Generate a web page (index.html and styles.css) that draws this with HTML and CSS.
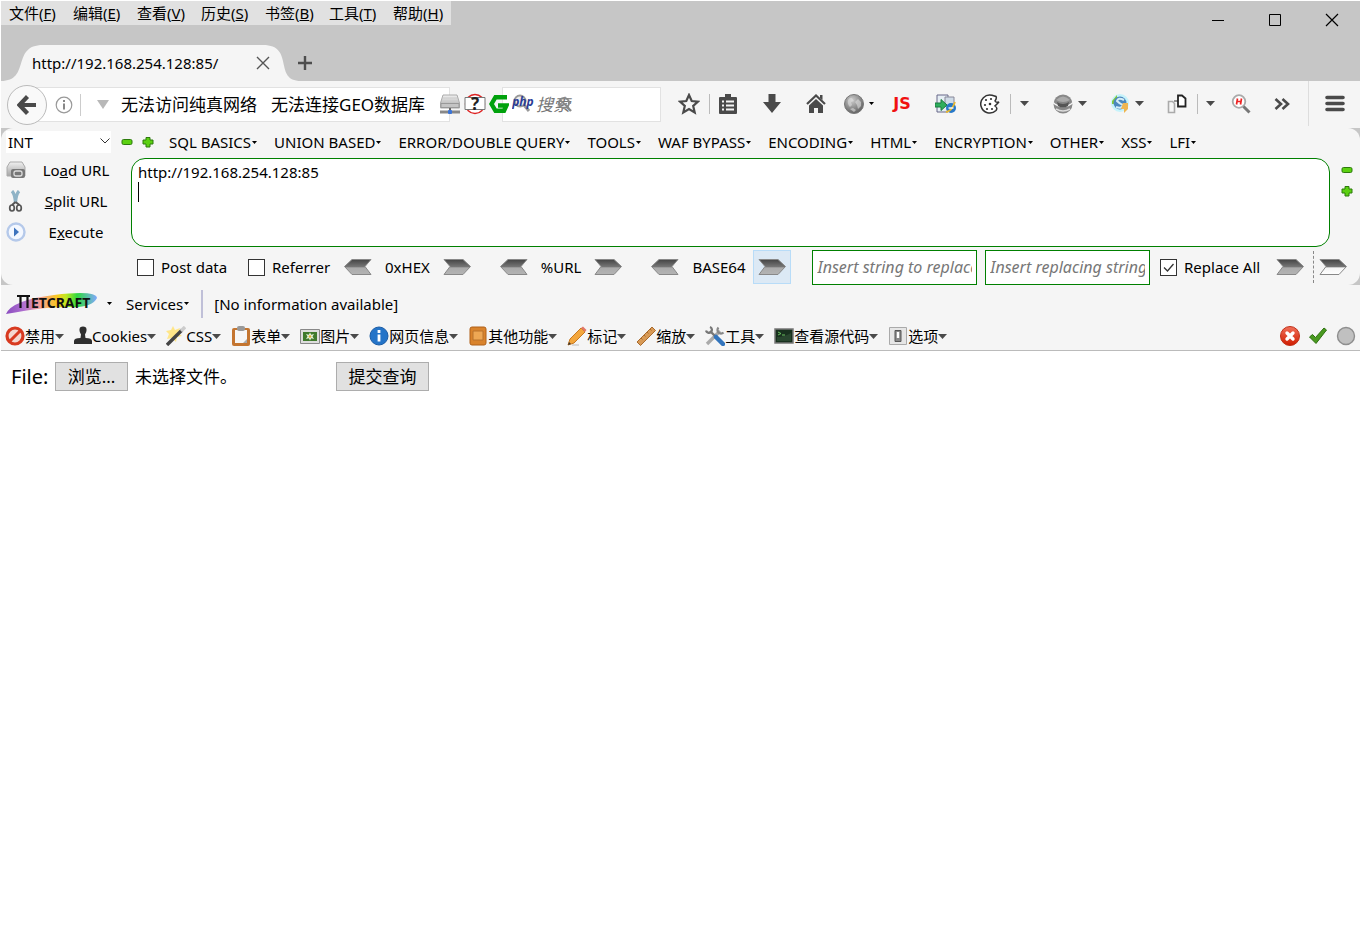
FILE: index.html
```html
<!DOCTYPE html>
<html lang="zh-CN">
<head>
<meta charset="utf-8">
<title>http://192.168.254.128:85/</title>
<link rel="stylesheet" href="styles.css">
</head>
<body>
<svg class="defs" aria-hidden="true">
  <defs>
    <linearGradient id="steel" x1="0" y1="0" x2="0" y2="1"><stop offset="0" stop-color="#444"/><stop offset=".5" stop-color="#777"/><stop offset=".55" stop-color="#aaa"/><stop offset="1" stop-color="#b4b4b4"/></linearGradient>
    <linearGradient id="steelopen" x1="0" y1="0" x2="0" y2="1"><stop offset="0" stop-color="#444"/><stop offset=".5" stop-color="#777"/><stop offset=".55" stop-color="#f4f4f4"/><stop offset="1" stop-color="#fff"/></linearGradient>
    <linearGradient id="metal" x1="0" y1="0" x2="0" y2="1"><stop offset="0" stop-color="#f0f0f0"/><stop offset="1" stop-color="#a4a4a4"/></linearGradient>
    <radialGradient id="ball" cx=".4" cy=".3" r=".8"><stop offset="0" stop-color="#ccc"/><stop offset="1" stop-color="#555"/></radialGradient>
    <linearGradient id="red" x1="0" y1="0" x2="0" y2="1"><stop offset="0" stop-color="#f0705a"/><stop offset="1" stop-color="#d01c00"/></linearGradient>
    <linearGradient id="rainbow"><stop offset="0" stop-color="#8a4cc0"/><stop offset=".2" stop-color="#b070d0"/><stop offset=".38" stop-color="#f8a090"/><stop offset=".56" stop-color="#f8c820"/><stop offset=".66" stop-color="#c0e820"/><stop offset=".78" stop-color="#30d840"/><stop offset="1" stop-color="#80a8ff"/></linearGradient>
    <symbol id="caret" viewBox="0 0 5 3"><path d="M0 0h5L2.500 3z"/></symbol>
    <symbol id="tri" viewBox="0 0 9 5"><path d="M0 0h9L4.500 5z"/></symbol>
    <symbol id="right" viewBox="0 0 28 16"><path d="M1 .5h19l7.500 7-7.500 8H1l6-8z" fill="url(#steel)" stroke="#888"/></symbol>
    <symbol id="left" viewBox="0 0 28 16"><path d="M27 .5H8L.5 7.500l7.500 8h19l-6-8z" fill="url(#steel)" stroke="#888"/></symbol>
    <symbol id="minus" viewBox="0 0 12 12"><rect x="1" y="3.500" width="10" height="5" rx="1.500" fill="#5bd010" stroke="#2c7a0c"/></symbol>
    <symbol id="plus" viewBox="0 0 12 12"><path d="M4 1.500h4V4h3v4H8v3H4V8H1V4h3z" fill="#5bd010" stroke="#2c7a0c" stroke-linejoin="round"/></symbol>
  </defs>
</svg>

<div class="window">
  <header class="titlebar">
    <nav class="menubar">
      <button>文件(<u>F</u>)</button><button>编辑(<u>E</u>)</button><button>查看(<u>V</u>)</button><button>历史(<u>S</u>)</button><button>书签(<u>B</u>)</button><button>工具(<u>T</u>)</button><button>帮助(<u>H</u>)</button>
    </nav>
    <div class="winctl">
      <button aria-label="最小化"><svg width="14" height="14"><path d="M1 7.500h12" stroke="#000"/></svg></button>
      <button aria-label="最大化"><svg width="14" height="14"><path d="M1.500 1.500h11v11h-11z" fill="none" stroke="#000"/></svg></button>
      <button aria-label="关闭"><svg width="14" height="14"><path d="M1 1l12 12M13 1L1 13" stroke="#000" stroke-width="1.200"/></svg></button>
    </div>
  </header>
  <div class="tabs">
    <div class="tab">
      <svg class="tabshape" viewBox="0 0 300 36" width="300" height="36"><path d="M0 36C30 36 10 0 42 0H262C294 0 272 36 300 36z" fill="#f5f5f5"/></svg>
      <span class="tabtitle">http://192.168.254.128:85/</span>
      <button aria-label="关闭标签页"><svg width="14" height="14"><path d="M1 1l12 12M13 1L1 13" stroke="#555" stroke-width="1.400"/></svg></button>
    </div>
    <button class="newtab" aria-label="新标签页"><svg width="16" height="16"><path d="M8 1v14M1 8h14" stroke="#4d4d4d" stroke-width="2.400"/></svg></button>
  </div>

  <div class="navbar">
    <button class="back" aria-label="后退"><svg width="20" height="20" viewBox="0 0 20 20"><path d="M10.500 1.500L2.500 10l8 8.500M3.500 10H19" fill="none" stroke="#4a4a4a" stroke-width="4.200"/></svg></button>
    <div class="urlbar">
      <svg width="18" height="18" viewBox="0 0 18 18"><circle cx="9" cy="9" r="7.800" fill="none" stroke="#999" stroke-width="1.200"/><path d="M9 7.500v6M9 4v2" stroke="#888" stroke-width="2"/></svg>
      <span class="vline"></span>
      <svg class="drop" width="12" height="9"><path d="M0 0h12L6 9z" fill="#b8b8b8"/></svg>
      <span class="geo">无法访问纯真网络</span><span class="geo">无法连接GEO数据库</span>
    </div>
    <div class="search">
      <input type="text" placeholder="搜索" aria-label="搜索">
      <div class="addons">
        <svg width="22" height="22" viewBox="0 0 22 22"><path d="M4 2h14l2.500 8v5h-19v-5z" fill="url(#metal)" stroke="#aaa"/><path d="M4 5h14M3 8h16" stroke="#ccc"/><path d="M2 10.500h18v4H2z" fill="#c4c4c4" stroke="#999"/><path d="M11 15v3" stroke="#666" stroke-width="2"/><path d="M1 19h20" stroke="#888" stroke-width="3"/><rect x="9" y="17" width="4" height="4" rx="1" fill="#3a74d8"/></svg>
        <svg width="22" height="22" viewBox="0 0 22 22"><circle cx="11" cy="11" r="9.500" fill="#fff" stroke="#d22" stroke-width="1.400"/><path d="M1 4.500h20v12H1z" fill="#fff" stroke="#777"/><text x="11" y="17" text-anchor="middle" font-size="17" font-weight="bold" fill="#222">?</text></svg>
        <svg width="20" height="20" viewBox="0 0 20 20"><path d="M18 3.200H6.500L2.500 10l4 6.800h8.500L17.500 11.500H9" fill="none" stroke="#00a10c" stroke-width="4.400"/></svg>
        <svg width="24" height="20" viewBox="0 0 24 20"><circle cx="8" cy="7" r="5.500" fill="#eee" stroke="#999" stroke-width="2"/><path d="M12 11l5 6" stroke="#999" stroke-width="3"/><text x="11" y="12" text-anchor="middle" font-size="12" font-weight="bold" font-style="italic" fill="#2a3c95">php</text></svg>
      </div>
      <svg class="lens" width="16" height="16" viewBox="0 0 16 16"><circle cx="8" cy="7" r="5" fill="none" stroke="#888" stroke-width="2"/><path d="M4 4l8 7" stroke="#888" stroke-width="2"/><path d="M11 11l4 4" stroke="#888" stroke-width="2.400"/></svg>
    </div>
    <div class="tools">
      <button class="w44" aria-label="收藏"><svg width="22" height="22" viewBox="0 0 22 22"><path d="M11 2l2.700 6 6.300.6-4.800 4.300 1.500 6.600L11 16l-5.700 3.500 1.500-6.600L2 8.600 8.300 8z" fill="none" stroke="#4a4a4a" stroke-width="2.200"/></svg></button>
      <span class="sep"></span>
      <button class="w44" aria-label="书签列表"><svg width="20" height="20" viewBox="0 0 20 20"><path d="M2 3h5V0h6v3h5q1 0 1 1v15q0 1-1 1H2q-1 0-1-1V4q0-1 1-1z" fill="#4a4a4a"/><path d="M4 7.500h2M8 7.500h8M4 11.500h2M8 11.500h8M4 15.500h2M8 15.500h8" stroke="#f5f5f5" stroke-width="2"/></svg></button>
      <button class="w44" aria-label="下载"><svg width="18" height="19" viewBox="0 0 18 19"><path d="M5.500 0h7v8H18l-9 11L0 8h5.500z" fill="#4a4a4a"/></svg></button>
      <button class="w44" aria-label="主页"><svg width="20" height="19" viewBox="0 0 20 19"><path d="M1 10L10 1.500 19 10" fill="none" stroke="#4a4a4a" stroke-width="2.200"/><path d="M3 11.500L10 5l7 6.500V19h-5v-5H8v5H3zM14 1h2.500v5L14 4z" fill="#4a4a4a"/></svg></button>
      <button class="w42" aria-label="代理"><svg width="20" height="20" viewBox="0 0 20 20"><circle cx="10" cy="10" r="9.500" fill="url(#ball)" stroke="#777"/><path d="M4 6q2-3 4-2l2 3-3 1 1 3-2 2q-3-3-2-7M11 8l3-3 3 3v4l-3 3-1-4zM6 15l3-1 3 2-2 2z" fill="#ddd" opacity=".6"/></svg><svg class="c5"><use href="#caret"/></svg></button>
      <button class="w44 js">JS</button>
      <button class="w44" aria-label="在 IE 中打开"><svg width="22" height="20" viewBox="0 0 22 20"><path d="M2 1h11v17H2z" fill="#e6eef4" stroke="#668"/><path d="M10 3h9v9h-9z" fill="#cfdbe6" stroke="#889"/><path d="M0 9h6V5.500l6 5.500-6 5.500V13H0z" fill="#2fae5c" stroke="#1b7a3e"/><circle cx="16" cy="14" r="5" fill="#2778c8"/><path d="M11 18Q17 17 20 8" stroke="#e8b830" stroke-width="1.800" fill="none"/><path d="M13.500 14h5" stroke="#fff" stroke-width="1.400"/></svg></button>
      <button class="w44" aria-label="Cookie"><svg width="20" height="20" viewBox="0 0 20 20"><path d="M12 1.300A9 9 0 1 0 16 16.500Q18 14 15 12q1-1 4-4-3 1-4-1 2-3 1-4.500z" fill="#fff" stroke="#333" stroke-width="1.500"/><g fill="#333"><circle cx="6" cy="6" r="1.100"/><circle cx="11" cy="5" r="1.100"/><circle cx="5" cy="11" r="1.100"/><circle cx="10" cy="10" r="1.300"/><circle cx="7" cy="15" r="1.100"/><circle cx="12" cy="15" r="1.100"/></g></svg></button>
      <span class="sep"></span>
      <button class="w34" aria-label="Cookie 菜单"><svg class="c9"><use href="#tri"/></svg></button>
      <button class="w57" aria-label="伪装"><svg width="20" height="20" viewBox="0 0 20 20"><circle cx="10" cy="10" r="9.500" fill="#888"/><path d="M3 6q7-7 14 0-7 4-14 0" fill="#aaa"/><path d="M0 8.500q4 4 10 4t10-4" fill="none" stroke="#f5f5f5" stroke-width="1.600"/><path d="M4 8q6 4 12 0l-1 4q-5 3-10 0z" fill="#555"/><path d="M3 15q7 4 14 0" fill="none" stroke="#ddd" stroke-width="1.500"/></svg><svg class="c9"><use href="#tri"/></svg></button>
      <button class="w57" aria-label="切换"><svg width="20" height="20" viewBox="0 0 20 20"><circle cx="10" cy="9" r="9" fill="#c6f3fb"/><path d="M2 7L7 1v3h6v6H2z" fill="#86cc36"/><circle cx="10" cy="9" r="6.500" fill="#4b87bd"/><path d="M14 6Q8 3 7 7q3 3 6 4-1 4-7 2" fill="none" stroke="#d4edf5" stroke-width="2"/><path d="M13 9h5v6l-4 4v-4h-3z" fill="#efb550"/></svg><svg class="c9"><use href="#tri"/></svg></button>
      <button class="w44" aria-label="移动页面"><svg width="20" height="20" viewBox="0 0 20 20"><path d="M1.500 7.500h4l2 2v9h-6z" fill="none" stroke="#aaa" stroke-width="1.600"/><path d="M7 7h4" stroke="#333"/><path d="M11 1.500h4l3.500 3v8H11z" fill="#fff" stroke="#222" stroke-width="1.800"/></svg></button>
      <span class="sep"></span>
      <button class="w32" aria-label="页面菜单"><svg class="c9"><use href="#tri"/></svg></button>
      <button class="w30" aria-label="HackBar 搜索"><svg width="20" height="20" viewBox="0 0 20 20"><circle cx="8" cy="7.500" r="6.300" fill="#fff" stroke="#aaa" stroke-width="1.800"/><path d="M12.500 12.500l6 6" stroke="#777" stroke-width="3"/><path d="M6.500 4.500l-1 6M10.500 4.500l-1 6M6 7.500h4" stroke="#e22" stroke-width="1.700"/></svg></button>
      <button class="w52" aria-label="更多工具"><svg width="16" height="12" viewBox="0 0 16 12"><path d="M1.500 1L7 6l-5.500 5M8.500 1L14 6l-5.500 5" fill="none" stroke="#4a4a4a" stroke-width="2.600"/></svg></button>
      <button class="w52 burger" aria-label="打开菜单"><svg width="20" height="17" viewBox="0 0 20 17"><path d="M2 2.500h16M2 8.500h16M2 14.500h16" stroke="#4a4a4a" stroke-width="3.600" stroke-linecap="round"/></svg></button>
    </div>
  </div>

  <div class="hackwrap">
  <section class="hackbar">
    <div class="hacktop">
      <select aria-label="类型"><option>INT</option></select>
      <div class="pm"><button aria-label="减"><svg width="12" height="12"><use href="#minus"/></svg></button><button aria-label="加"><svg width="12" height="12"><use href="#plus"/></svg></button></div>
      <nav class="hackmenu">
        <button>SQL BASICS<svg class="c5"><use href="#caret"/></svg></button>
        <button>UNION BASED<svg class="c5"><use href="#caret"/></svg></button>
        <button>ERROR/DOUBLE QUERY<svg class="c5"><use href="#caret"/></svg></button>
        <button>TOOLS<svg class="c5"><use href="#caret"/></svg></button>
        <button>WAF BYPASS<svg class="c5"><use href="#caret"/></svg></button>
        <button>ENCODING<svg class="c5"><use href="#caret"/></svg></button>
        <button>HTML<svg class="c5"><use href="#caret"/></svg></button>
        <button>ENCRYPTION<svg class="c5"><use href="#caret"/></svg></button>
        <button>OTHER<svg class="c5"><use href="#caret"/></svg></button>
        <button>XSS<svg class="c5"><use href="#caret"/></svg></button>
        <button>LFI<svg class="c5"><use href="#caret"/></svg></button>
      </nav>
    </div>
    <div class="hackmid">
      <div class="actions">
        <button><svg width="20" height="20" viewBox="0 0 20 20"><path d="M4 2h12l3 5v9H1V7z" fill="url(#metal)" stroke="#aaa"/><rect x="5" y="9" width="14" height="9" rx="2" fill="#777"/><rect x="8" y="11" width="8" height="5" rx="2" fill="none" stroke="#ddd" stroke-width="1.300"/></svg><span>Lo<u>a</u>d URL</span></button>
        <button><svg width="20" height="22" viewBox="0 0 20 22"><path d="M6 1q3 3 3.500 12M13 1q-3 3-3.500 12" stroke="#8fb3c6" stroke-width="3.200" fill="none"/><path d="M9.500 12L6 15M9.500 12l4 3" stroke="#555" stroke-width="2"/><ellipse cx="6" cy="18" rx="2.300" ry="3" fill="none" stroke="#555" stroke-width="1.700"/><ellipse cx="13" cy="18" rx="2.300" ry="3" fill="none" stroke="#555" stroke-width="1.700"/></svg><span><u>S</u>plit URL</span></button>
        <button><svg width="20" height="20" viewBox="0 0 20 20"><circle cx="10" cy="10" r="8.500" fill="#f4f8ff" stroke="#b5c9ea" stroke-width="2.400"/><path d="M8 5.500l5 4.500-5 4.500z" fill="#3f74bd"/></svg><span>E<u>x</u>ecute</span></button>
      </div>
      <div class="urlbox"><textarea aria-label="URL" spellcheck="false">http://192.168.254.128:85
</textarea><span class="cursor"></span></div>
      <div class="pmv"><button aria-label="减少行"><svg width="12" height="12"><use href="#minus"/></svg></button><button aria-label="增加行"><svg width="12" height="12"><use href="#plus"/></svg></button></div>
    </div>
    <div class="hackbot">
      <label class="chk post"><input type="checkbox">Post data</label>
      <label class="chk ref"><input type="checkbox">Referrer</label>
      <div class="enc"><button aria-label="0xHEX 解码"><svg width="28" height="16"><use href="#left"/></svg></button><span>0xHEX</span><button aria-label="0xHEX 编码"><svg width="28" height="16"><use href="#right"/></svg></button></div>
      <div class="enc"><button aria-label="URL 解码"><svg width="28" height="16"><use href="#left"/></svg></button><span>%URL</span><button aria-label="URL 编码"><svg width="28" height="16"><use href="#right"/></svg></button></div>
      <div class="enc"><button aria-label="BASE64 解码"><svg width="28" height="16"><use href="#left"/></svg></button><span>BASE64</span><button class="on" aria-label="BASE64 编码"><svg width="28" height="16"><use href="#right"/></svg></button></div>
      <div class="fields"><input type="text" placeholder="Insert string to replace" aria-label="Insert string to replace"><input type="text" placeholder="Insert replacing string" aria-label="Insert replacing string"></div>
      <label class="chk all"><input type="checkbox" checked>Replace All</label>
      <button class="go" aria-label="替换"><svg width="28" height="16"><use href="#right"/></svg></button>
      <span class="dash"></span>
      <button class="go" aria-label="全部替换"><svg width="28" height="16" viewBox="0 0 28 16"><path d="M1 .5h19l7.500 7-7.500 8H1l6-8z" fill="url(#steelopen)" stroke="#888"/></svg></button>
    </div>
  </section>
  </div>

  <div class="netcraft">
    <svg width="92" height="24" viewBox="0 0 92 24" role="img" aria-label="Netcraft"><path d="M0 22Q6 8 48 3T91 6Q86 16 64 15T0 22z" fill="url(#rainbow)"/><path d="M14.500 16V4M11 4h13M21.500 4v12" stroke="#111" stroke-width="2.200" fill="none"/><text x="25" y="16" font-size="14" font-weight="bold" fill="#111">ETCRAFT</text></svg>
    <svg class="c5"><use href="#caret"/></svg>
    <button class="services">Services<svg class="c5"><use href="#caret"/></svg></button>
    <span class="info">[No information available]</span>
  </div>

  <div class="webdev">
    <button><svg width="20" height="20" viewBox="0 0 20 20"><circle cx="10" cy="10" r="8" fill="#f3d8d0" stroke="#d83a20" stroke-width="3.200"/><path d="M4 16L16 4" stroke="#d83a20" stroke-width="3"/></svg>禁用<svg class="c9"><use href="#tri"/></svg></button>
    <button><svg width="18" height="20" viewBox="0 0 18 20"><path d="M6 1.500q3-2 6 0 1.500 3-1 7l.5 3.500Q18 12 18 15v3H0v-3q0-3 6.500-3L7 8.500Q4.500 4.500 6 1.500z" fill="#2e2e2e"/></svg>Cookies<svg class="c9"><use href="#tri"/></svg></button>
    <button><svg width="20" height="20" viewBox="0 0 20 20"><path d="M7 0l2 4 5-2-2 5 4 3-5 1-1 5-4-4-5 1 2-5-3-3 5-1z" fill="#ffe688"/><path d="M1 19L16 4" stroke="#444" stroke-width="3.400"/><path d="M15 5l4-4" stroke="#ccc" stroke-width="3.400"/></svg>CSS<svg class="c9"><use href="#tri"/></svg></button>
    <button><svg width="20" height="20" viewBox="0 0 20 20"><rect x="1" y="2" width="18" height="18" rx="2" fill="#c47530"/><path d="M4 4h12v13H4z" fill="#f6f6f6"/><path d="M12 17l4-4v4z" fill="#aaa"/><rect x="6" y="0" width="8" height="5" rx="2" fill="#999"/></svg>表单<svg class="c9"><use href="#tri"/></svg></button>
    <button><svg width="20" height="20" viewBox="0 0 20 20"><path d="M.5 3.500h19v14H.5z" fill="#ddd" stroke="#888"/><path d="M3 6h14v9H3z" fill="#3f7a2c"/><path d="M10 6.500l1.200 2.200 2.800-.7-1.500 2.500 1.500 2.500-2.800-.7L10 14.500l-1.200-2.200L6 13l1.500-2.500L6 8l2.800.7z" fill="#e4efd8"/><circle cx="10" cy="10.500" r="1.300" fill="#e0b030"/></svg>图片<svg class="c9"><use href="#tri"/></svg></button>
    <button><svg width="20" height="20" viewBox="0 0 20 20"><circle cx="10" cy="10" r="9" fill="#2474c8" stroke="#1b5ca5"/><path d="M10 8.500v7M10 4v3" stroke="#fff" stroke-width="2.800"/></svg>网页信息<svg class="c9"><use href="#tri"/></svg></button>
    <button><svg width="20" height="20" viewBox="0 0 20 20"><rect x="2" y="1" width="16" height="18" rx="2" fill="#d9832c" stroke="#b06018"/><path d="M5 5h10v9H5z" fill="#eea754" stroke="#b8722c"/></svg>其他功能<svg class="c9"><use href="#tri"/></svg></button>
    <button><svg width="20" height="20" viewBox="0 0 20 20"><path d="M1 19l2-6L14 2l4 4L7 17z" fill="#f3a63c" stroke="#c77820"/><path d="M14 2l2-1.500 3.500 3.500L18 6z" fill="#e27868"/><path d="M1 19l1-3 2 2z" fill="#333"/><path d="M5 19h7" stroke="#bbb"/></svg>标记<svg class="c9"><use href="#tri"/></svg></button>
    <button><svg width="20" height="20" viewBox="0 0 20 20"><path d="M1 16L16 1l3.500 3.500L4.500 19.500z" fill="#d89a56" stroke="#a96a2c"/><path d="M5 12l1.500 1.500M8 9l1.500 1.500M11 6l1.500 1.500M14 3l1.500 1.500" stroke="#a96a2c"/></svg>缩放<svg class="c9"><use href="#tri"/></svg></button>
    <button><svg width="20" height="20" viewBox="0 0 20 20"><path d="M2 18L15 5" stroke="#aaa" stroke-width="3.400"/><path d="M13.500 1.500a3.500 3.500 0 1 0 5 5" fill="none" stroke="#888" stroke-width="2.200"/><path d="M5 5l6 6" stroke="#777" stroke-width="2.400"/><path d="M1 4.500a3 3 0 1 0 4-3.500" fill="none" stroke="#777" stroke-width="2.200"/><path d="M11 11l7 7" stroke="#3375bd" stroke-width="4.500" stroke-linecap="round"/></svg>工具<svg class="c9"><use href="#tri"/></svg></button>
    <button><svg width="20" height="20" viewBox="0 0 20 20"><path d="M1 3h18v14H1z" fill="#18301e" stroke="#777" stroke-width="1.500"/><path d="M3 11q7 0 14-4v8H3z" fill="#29462f"/><path d="M4 6l3 1.500L4 9M8 9h3" stroke="#6ac060" fill="none"/></svg>查看源代码<svg class="c9"><use href="#tri"/></svg></button>
    <button><svg width="20" height="20" viewBox="0 0 20 20"><path d="M1.500 1.500h17v17h-17z" fill="#e6e6e6" stroke="#aaa"/><path d="M7 4.500h6v11H7z" fill="#888" stroke="#555"/><path d="M10 6v6" stroke="#fff" stroke-width="2.400"/></svg>选项<svg class="c9"><use href="#tri"/></svg></button>
    <div class="status">
      <svg width="20" height="20" viewBox="0 0 20 20"><circle cx="10" cy="10" r="9.500" fill="url(#red)" stroke="#c03018"/><path d="M7 7l6 6M13 7l-6 6" stroke="#fff" stroke-width="3.400" stroke-linecap="round"/></svg>
      <svg width="20" height="20" viewBox="0 0 20 20"><path d="M1.500 11l3-2.500 3 3L16 2l2.500 2L8 17.500z" fill="#4a9a20" stroke="#2d7010"/></svg>
      <svg width="20" height="20" viewBox="0 0 20 20"><circle cx="10" cy="10" r="8.500" fill="#c0c0c0" stroke="#8e8e8e" stroke-width="1.400"/></svg>
    </div>
  </div>

  <main class="page">
    <form class="upload">
      <span class="filelabel">File:</span>
      <input type="file" id="file" class="hiddenfile" aria-label="File"><label for="file" class="btn browse">浏览...</label>
      <span class="nofile">未选择文件。</span>
      <button type="button" class="btn submit">提交查询</button>
    </form>
  </main>
</div>
</body>
</html>
```

FILE: styles.css
```css
* { box-sizing: border-box; }
body { margin: 0; background: #fff; color: #000; font: 15px/20px "Noto Sans", "Noto Sans CJK SC", sans-serif; }
button { margin: 0; padding: 0; border: 0; background: none; color: inherit; font: inherit; display: inline-flex; align-items: center; justify-content: center; white-space: nowrap; }
input, textarea, select { font: inherit; color: inherit; }
svg { flex: none; display: block; }
.defs { position: absolute; width: 0; height: 0; }
.c5 { width: 5px; height: 3px; }
.c9 { width: 9px; height: 5px; fill: #4a4a4a; }

.window { padding: 1px 1px 0; }
.titlebar { display: flex; justify-content: space-between; align-items: flex-start; height: 44px; background: #c6c6c6; }
.menubar { display: flex; gap: 16px; height: 24px; padding: 0 8px 0 8px; background: #e1e1e1; }
.menubar button { width: 48px; justify-content: flex-start; }
.menubar button:last-child { width: 50px; }
.winctl { display: flex; }
.winctl button { width: 57px; height: 38px; }

.tabs { display: flex; align-items: center; height: 36px; background: #c6c6c6; }
.tab { position: relative; display: flex; align-items: center; justify-content: space-between; width: 300px; height: 36px; padding: 0 31px 0 31px; }
.tabshape { position: absolute; left: 0; top: 0; }
.tabtitle, .tab button { position: relative; }
.newtab { margin-left: -4px; }

.navbar { display: flex; align-items: center; height: 47px; padding-left: 6px; background: #f5f5f5; }
.back { position: relative; z-index: 1; flex: none; width: 40px; height: 40px; border: 1px solid #bbb; border-radius: 50%; background: #f9f9f9; }
.urlbar { display: flex; align-items: center; flex: none; width: 423px; height: 35px; margin-left: -20px; padding-left: 27px; border: 1px solid #e2e2e2; background: #fff; white-space: nowrap; font-size: 17px; }
.vline { width: 1px; height: 22px; margin: 0 16px 0 7px; background: #ccc; }
.drop { margin-right: 12px; }
.geo { margin-right: 14px; }
.search { position: relative; flex: 1; min-width: 150px; margin-left: 52px; }
.search input { display: block; width: 100%; height: 35px; padding: 0 0 0 33px; border: 1px solid #e2e2e2; background: #fff; font-size: 17px; font-style: italic; }
.search input::placeholder, .fields input::placeholder { color: #777; opacity: 1; }
.addons { position: absolute; left: -63px; top: 6px; display: flex; align-items: center; gap: 3px; }
.lens { position: absolute; left: 54px; top: 9px; }
.tools { display: flex; align-items: center; flex: none; height: 47px; padding: 0 0 2px 6px; }
.tools button { height: 45px; gap: 5px; }
.w30 { width: 30px; } .w32 { width: 32px; } .w34 { width: 34px; } .w42 { width: 42px; }
.w44 { width: 44px; } .w52 { width: 52px; } .w57 { width: 57px; }
.sep { width: 1px; height: 20px; margin: 0 -4px 0 -2px; background: #bbb; }
.tools .js { color: #f01010; font: bold 16px "DejaVu Sans", sans-serif; }
.tools .burger { border-left: 1px solid #ddd; }

.hackwrap { background: #c6c6c6; }
.hackbar { border-radius: 12px; background: #f5f5f5; }
.hacktop { display: flex; align-items: center; height: 30px; padding: 0 0 2px 5px; }
.hacktop select { appearance: none; width: 105px; height: 22px; padding: 0 2px; border: 0; border-radius: 0; background: #fff url("data:image/svg+xml,%3Csvg xmlns='http://www.w3.org/2000/svg' width='10' height='6'%3E%3Cpath d='M.5.5L5 5 9.500.5' fill='none' stroke='%23333'/%3E%3C/svg%3E") no-repeat 94px 7px; line-height: 22px; }
.pm { display: flex; gap: 9px; margin: 0 15px 0 10px; }
.hackmenu { display: flex; gap: 17px; }
.hackmenu button { gap: 1px; }
.hackmid { display: flex; }
.actions { display: flex; flex-direction: column; width: 130px; padding: 0 5px; }
.actions button { height: 30px; justify-content: flex-start; }
.actions button:first-child { height: 24px; margin-bottom: 4px; }
.actions button:last-child { margin-top: 1px; }
.actions span { width: 102px; text-align: center; }
.urlbox { position: relative; flex: 1; }
.urlbox textarea { display: block; width: 100%; height: 89px; padding: 3px 6px; border: 1px solid #008000; border-radius: 14px; background: #fff; line-height: 20px; outline: 0; resize: none; overflow: hidden; }
.cursor { position: absolute; left: 7px; top: 24px; width: 1px; height: 20px; background: #000; }
.pmv { display: flex; flex-direction: column; gap: 9px; width: 30px; padding: 6px 0 0 4px; align-items: center; }
.hackbot { display: flex; align-items: center; height: 38px; padding: 2px 8px 0 136px; }
.chk { display: flex; align-items: center; gap: 7px; white-space: nowrap; }
.chk input { appearance: none; width: 17px; height: 17px; margin: 0; border: 1px solid #333; background: #fff; }
.chk input:checked { background: #fff url("data:image/svg+xml,%3Csvg xmlns='http://www.w3.org/2000/svg' width='15' height='15'%3E%3Cpath d='M3 7.500l3.500 3.500L12.500 4' fill='none' stroke='%23333' stroke-width='1.300'/%3E%3C/svg%3E") no-repeat; }
.post { width: 111px; }
.ref { width: 91px; }
.enc { display: flex; align-items: center; gap: 8px; margin-right: 19px; }
.enc button { width: 38px; height: 34px; border: 1px solid transparent; }
.enc .on { border-color: #b8dcf8; background: #dce9f5; }
.fields { display: flex; flex: 1; gap: 8px; margin: 0 10px 0 2px; }
.fields input { flex: 1; min-width: 0; width: 100px; height: 35px; padding: 0 4px; border: 1px solid #008000; background: #fff; font-size: 16px; font-style: italic; }
.all { width: 111px; }
.go { width: 38px; height: 34px; }
.dash { height: 32px; margin-left: 4px; border-left: 1px dashed #888; }

.netcraft { display: flex; align-items: center; height: 37px; padding-left: 5px; background: #f5f5f5; }
.netcraft > .c5 { margin: 0 14px 0 9px; }
.services { height: 28px; margin-right: 12px; gap: 1px; }
.info { padding-left: 11px; border-left: 2px solid #c0c0d8; line-height: 28px; }

.webdev { display: flex; align-items: center; gap: 10px; height: 29px; padding: 0 4px; border-bottom: 1px solid #bbb; background: #f5f5f5; }
.status { display: flex; gap: 8px; margin-left: auto; }

.page { padding: 11px 10px; }
.upload { display: flex; align-items: center; height: 29px; font-size: 17px; }
.filelabel { width: 44px; font-size: 20px; }
.hiddenfile { position: absolute; opacity: 0; width: 1px; height: 1px; }
.btn { display: flex; align-items: center; justify-content: center; height: 29px; border: 1px solid #adadad; background: #e1e1e1; font-size: 17px; }
.browse { width: 73px; margin-right: 7px; }
.nofile { width: 201px; }
.submit { width: 93px; }
```
